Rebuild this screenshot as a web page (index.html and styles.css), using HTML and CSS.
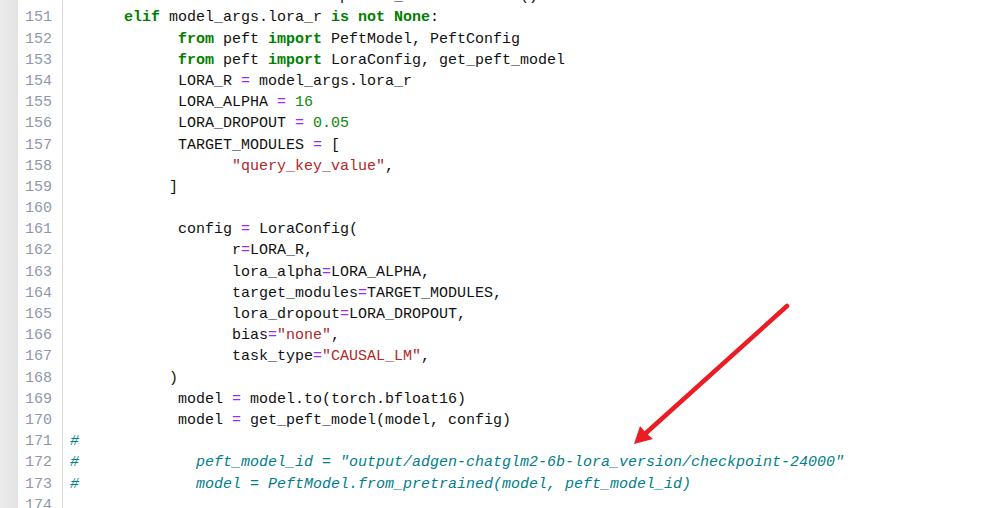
FILE: index.html
```html
<!DOCTYPE html>
<html lang="en">
<head>
  <meta charset="UTF-8" />
  <title>finetune.py</title>
  <link rel="stylesheet" href="styles.css">
</head>
<body>
  <div class="editor">
    <!-- left margin + line numbers -->
    <div class="margin"></div>
    <div class="gutter">
      <div class="ln">150</div>
      <div class="ln">151</div>
      <div class="ln">152</div>
      <div class="ln">153</div>
      <div class="ln">154</div>
      <div class="ln">155</div>
      <div class="ln">156</div>
      <div class="ln">157</div>
      <div class="ln">158</div>
      <div class="ln">159</div>
      <div class="ln">160</div>
      <div class="ln">161</div>
      <div class="ln">162</div>
      <div class="ln">163</div>
      <div class="ln">164</div>
      <div class="ln">165</div>
      <div class="ln">166</div>
      <div class="ln">167</div>
      <div class="ln">168</div>
      <div class="ln">169</div>
      <div class="ln">170</div>
      <div class="ln">171</div>
      <div class="ln">172</div>
      <div class="ln">173</div>
      <div class="ln">174</div>
    </div>

    <!-- source text -->
    <div class="code">
      <div class="line">            model.transformer.prefix_encoder.float()</div>
      <div class="line">      <span class="kw">elif</span> model_args.lora_r <span class="kw">is not None</span>:</div>
      <div class="line">            <span class="kw">from</span> peft <span class="kw">import</span> PeftModel, PeftConfig</div>
      <div class="line">            <span class="kw">from</span> peft <span class="kw">import</span> LoraConfig, get_peft_model</div>
      <div class="line">            LORA_R <span class="op">=</span> model_args.lora_r</div>
      <div class="line">            LORA_ALPHA <span class="op">=</span> <span class="num">16</span></div>
      <div class="line">            LORA_DROPOUT <span class="op">=</span> <span class="num">0.05</span></div>
      <div class="line">            TARGET_MODULES <span class="op">=</span> [</div>
      <div class="line">                  <span class="str">"query_key_value"</span>,</div>
      <div class="line">           ]</div>
      <div class="line"> </div>
      <div class="line">            config <span class="op">=</span> LoraConfig(</div>
      <div class="line">                  r<span class="op">=</span>LORA_R,</div>
      <div class="line">                  lora_alpha<span class="op">=</span>LORA_ALPHA,</div>
      <div class="line">                  target_modules<span class="op">=</span>TARGET_MODULES,</div>
      <div class="line">                  lora_dropout<span class="op">=</span>LORA_DROPOUT,</div>
      <div class="line">                  bias<span class="op">=</span><span class="str">"none"</span>,</div>
      <div class="line">                  task_type<span class="op">=</span><span class="str">"CAUSAL_LM"</span>,</div>
      <div class="line">           )</div>
      <div class="line">            model <span class="op">=</span> model.to(torch.bfloat16)</div>
      <div class="line">            model <span class="op">=</span> get_peft_model(model, config)</div>
      <div class="line"><span class="cm">#</span></div>
      <div class="line"><span class="cm">#             peft_model_id = "output/adgen-chatglm2-6b-lora_version/checkpoint-24000"</span></div>
      <div class="line"><span class="cm">#             model = PeftModel.from_pretrained(model, peft_model_id)</span></div>
      <div class="line"> </div>
    </div>

    <!-- red annotation arrow drawn over the code -->
    <svg class="arrow" width="990" height="508" viewBox="0 0 990 508">
      <line x1="787" y1="306" x2="646" y2="433" stroke="#ec1c24" stroke-width="4.5" stroke-linecap="round" />
      <polygon points="634,444 640,426 646,433 653,439" fill="#ec1c24" />
    </svg>
  </div>
</body>
</html>
```

FILE: styles.css
```css
/* Global */
body {
  margin: 0;
  background: #fff;
  overflow: hidden;
}
.editor {
  position: relative;
  display: flex;
  align-items: flex-start;
  height: 508px;
  overflow: hidden;
  font-family: 'Liberation Mono', 'Courier New', monospace;
  font-size: 15px;
}
/* grey strip at the far left */
.margin {
  width: 18px;
  height: 508px;
  flex: none;
  background: linear-gradient(to right, #ececec, #e3e3e3);
}
.gutter {
  width: 34px;
  flex: none;
  padding-right: 10px;
  border-right: 1px solid #d9d9d9;
  margin-top: -13.8px;
  padding-bottom: 20px;
  text-align: right;
  color: #8e98aa;
}
.ln,
.line {
  height: 21.2px;
  line-height: 21.2px;
}
.code {
  flex: 1;
  padding-left: 7px;
  margin-top: -13.8px;
  color: #111;
}
.line {
  white-space: pre;
}
/* syntax colours */
.kw {
  color: #008000;
  font-weight: bold;
}
.op {
  color: #9a2bff;
}
.num {
  color: #0a8a0a;
}
.str {
  color: #b3262a;
}
.cm {
  color: #00808a;
  font-style: italic;
}
.arrow {
  position: absolute;
  left: 0;
  top: 0;
}
```
